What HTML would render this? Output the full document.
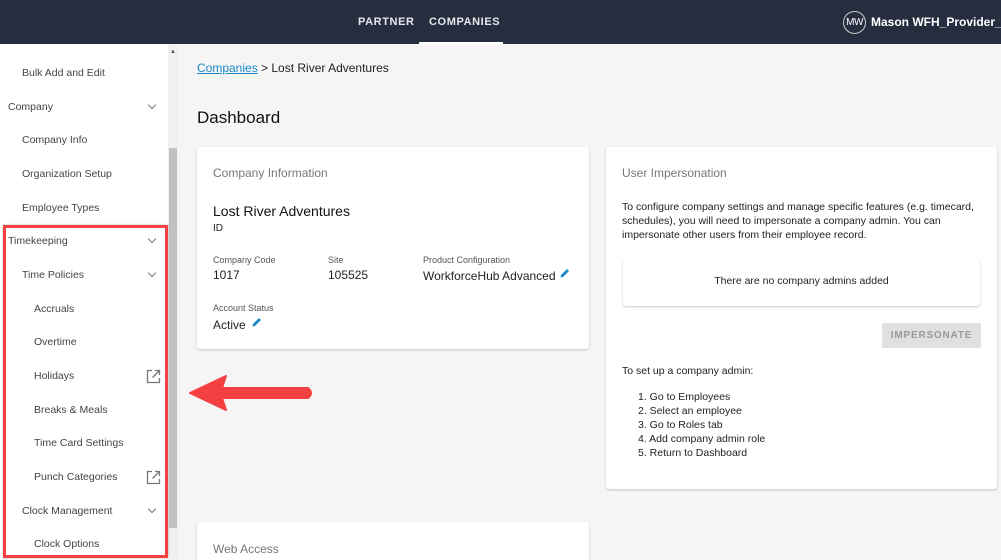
<!DOCTYPE html>
<html><head><style>
*{margin:0;padding:0;box-sizing:border-box}
html,body{width:1001px;height:560px;overflow:hidden}
body{background:#f5f5f5;font-family:"Liberation Sans",sans-serif;color:#222;position:relative}
.a{position:absolute;white-space:nowrap}
.hdr{left:0;top:0;width:1001px;height:44px;background:#252d3e}
.nav{color:#e6e8ec;font-size:11px;font-weight:bold;letter-spacing:.6px;top:16px}
.side{left:0;top:44px;width:168px;height:516px;background:#fff}
.sb{left:168px;top:44px;width:10px;height:516px;background:#f0f0f0}
.si{font-size:10.5px;color:#444}
.card{background:#fff;border-radius:3px;box-shadow:0 1px 2px rgba(0,0,0,.2)}
.chev{width:6px;height:6px;border-right:1.2px solid #777;border-bottom:1.2px solid #777;transform:rotate(45deg)}
.lbl{font-size:9px;color:#555}
.val{font-size:12px;color:#222}
</style></head><body>
<div class="a hdr"></div>
<div class="a nav" style="left:358px">PARTNER</div>
<div class="a nav" style="left:429px">COMPANIES</div>
<div class="a" style="left:419px;top:42px;width:84px;height:3px;background:#fff"></div>
<div class="a" style="left:843px;top:11px;width:23px;height:23px;border:1.3px solid #ccc;border-radius:50%;color:#fff;font-size:10px;text-align:center;line-height:21px;letter-spacing:-.5px">MW</div>
<div class="a" style="left:871px;top:15px;color:#fff;font-size:12px;font-weight:bold">Mason WFH_Provider_Log</div>

<div class="a side"></div>
<div class="a sb"></div>
<div class="a" style="left:169px;top:148px;width:8px;height:380px;background:#c1c1c1"></div>
<div class="a" style="left:170px;top:49px;font-size:6px;color:#555">▲</div>

<div class="a si" style="left:22px;top:67px">Bulk Add and Edit</div>
<div class="a si" style="left:8px;top:101px">Company</div><div class="a chev" style="left:149px;top:102px"></div>
<div class="a si" style="left:22px;top:134px">Company Info</div>
<div class="a si" style="left:22px;top:168px">Organization Setup</div>
<div class="a si" style="left:22px;top:202px">Employee Types</div>
<div class="a si" style="left:8px;top:235px">Timekeeping</div><div class="a chev" style="left:149px;top:236px"></div>
<div class="a si" style="left:22px;top:269px">Time Policies</div><div class="a chev" style="left:149px;top:270px"></div>
<div class="a si" style="left:34px;top:303px">Accruals</div>
<div class="a si" style="left:34px;top:336px">Overtime</div>
<div class="a si" style="left:34px;top:370px">Holidays</div>
<svg class="a" style="left:146px;top:369px" width="15" height="15"><path d="M6 1.5H1.5v12h12V9M9 1.5h4.5V6M13.5 1.5L6.5 8.5" fill="none" stroke="#777" stroke-width="1.3"/></svg>
<div class="a si" style="left:34px;top:404px">Breaks &amp; Meals</div>
<div class="a si" style="left:34px;top:437px">Time Card Settings</div>
<div class="a si" style="left:34px;top:471px">Punch Categories</div>
<svg class="a" style="left:146px;top:470px" width="15" height="15"><path d="M6 1.5H1.5v12h12V9M9 1.5h4.5V6M13.5 1.5L6.5 8.5" fill="none" stroke="#777" stroke-width="1.3"/></svg>
<div class="a si" style="left:22px;top:505px">Clock Management</div><div class="a chev" style="left:149px;top:506px"></div>
<div class="a si" style="left:34px;top:538px">Clock Options</div>
<div class="a" style="left:3px;top:225px;width:165px;height:333px;border:3px solid #f44040;box-shadow:0 0 2px rgba(0,0,0,.3)"></div>

<svg class="a" style="left:186px;top:372px" width="132" height="42"><path d="M4 21 L40 4 L36 16 L122 16 Q128 21 122 26 L36 26 L40 38 Z" fill="#f44040" stroke="#f44040" stroke-linejoin="round" stroke-width="2"/></svg>

<div class="a" style="left:197px;top:61px;font-size:12px"><span style="color:#1a8ac7;text-decoration:underline">Companies</span> &gt; Lost River Adventures</div>
<div class="a" style="left:197px;top:108px;font-size:17px;color:#111">Dashboard</div>

<div class="a card" style="left:197px;top:147px;width:392px;height:202px"></div>
<div class="a" style="left:213px;top:166px;font-size:12px;color:#777">Company Information</div>
<div class="a" style="left:213px;top:203px;font-size:14px;color:#111">Lost River Adventures</div>
<div class="a" style="left:213px;top:223px;font-size:10px;color:#222">ID</div>
<div class="a lbl" style="left:213px;top:255px">Company Code</div><div class="a val" style="left:213px;top:268px">1017</div>
<div class="a lbl" style="left:328px;top:255px">Site</div><div class="a val" style="left:328px;top:268px">105525</div>
<div class="a lbl" style="left:423px;top:255px">Product Configuration</div><div class="a val" style="left:423px;top:269px">WorkforceHub Advanced</div>
<svg class="a" style="left:559px;top:267px" width="12" height="12"><path d="M1.5 10.5L2 8L8 2L10 4L4 10Z" fill="#1a8ac7"/></svg>
<div class="a lbl" style="left:213px;top:303px">Account Status</div><div class="a val" style="left:213px;top:318px">Active</div>
<svg class="a" style="left:251px;top:316px" width="12" height="12"><path d="M1.5 10.5L2 8L8 2L10 4L4 10Z" fill="#1a8ac7"/></svg>

<div class="a card" style="left:606px;top:147px;width:391px;height:342px"></div>
<div class="a" style="left:622px;top:166px;font-size:12px;color:#777">User Impersonation</div>
<div class="a" style="left:622px;top:200px;font-size:10.5px;line-height:14px;white-space:normal;width:362px;color:#222">To configure company settings and manage specific features (e.g. timecard, schedules), you will need to impersonate a company admin. You can impersonate other users from their employee record.</div>
<div class="a card" style="left:623px;top:258px;width:357px;height:48px"></div>
<div class="a" style="left:623px;top:275px;width:357px;text-align:center;font-size:10.5px">There are no company admins added</div>
<div class="a" style="left:882px;top:323px;width:99px;height:25px;background:#e0e0e0;border-radius:2px;color:#999;font-size:10px;font-weight:bold;letter-spacing:.8px;text-align:center;line-height:25px">IMPERSONATE</div>
<div class="a" style="left:622px;top:365px;font-size:10.5px">To set up a company admin:</div>
<div class="a" style="left:638px;top:390px;font-size:10.5px;line-height:14px">1. Go to Employees<br>2. Select an employee<br>3. Go to Roles tab<br>4. Add company admin role<br>5. Return to Dashboard</div>

<div class="a card" style="left:197px;top:522px;width:392px;height:50px"></div>
<div class="a" style="left:213px;top:542px;font-size:12px;color:#777">Web Access</div>
</body></html>
